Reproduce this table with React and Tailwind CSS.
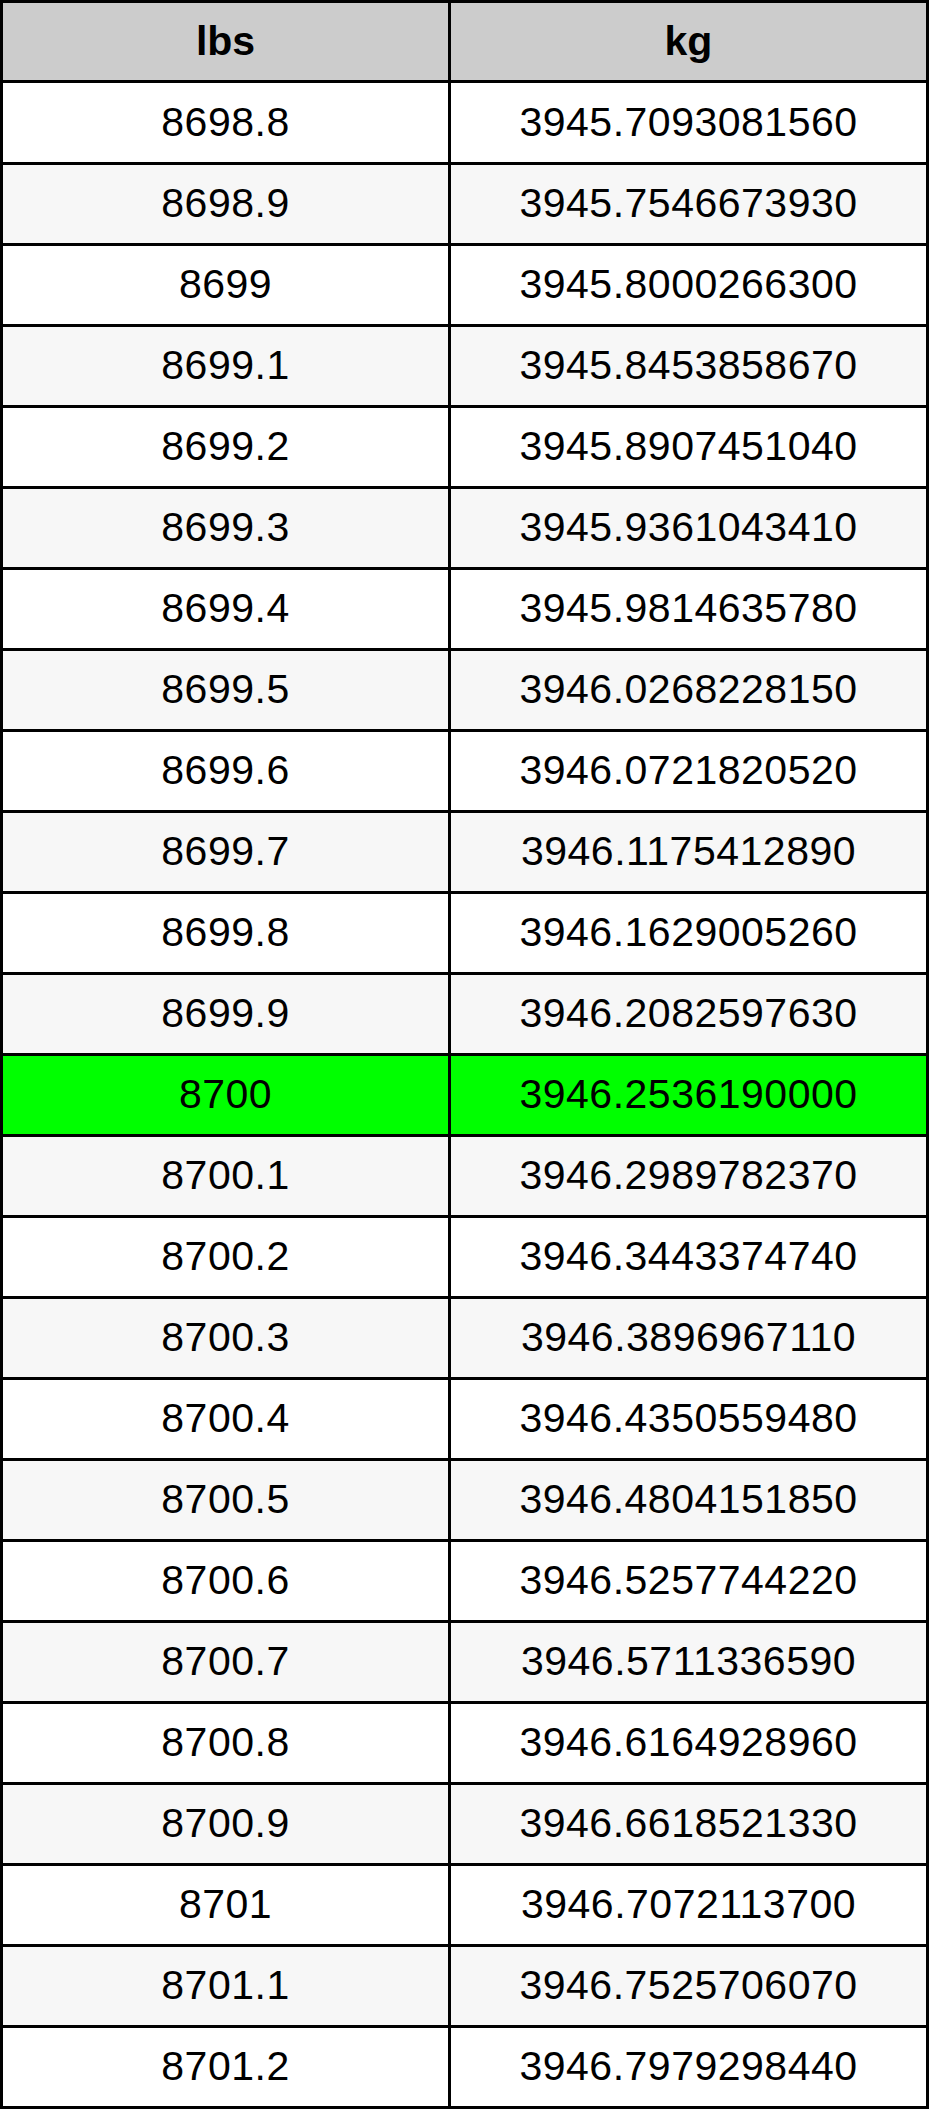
const rows = [
  ["8698.8", "3945.7093081560"],
  ["8698.9", "3945.7546673930"],
  ["8699", "3945.8000266300"],
  ["8699.1", "3945.8453858670"],
  ["8699.2", "3945.8907451040"],
  ["8699.3", "3945.9361043410"],
  ["8699.4", "3945.9814635780"],
  ["8699.5", "3946.0268228150"],
  ["8699.6", "3946.0721820520"],
  ["8699.7", "3946.1175412890"],
  ["8699.8", "3946.1629005260"],
  ["8699.9", "3946.2082597630"],
  ["8700", "3946.2536190000"],
  ["8700.1", "3946.2989782370"],
  ["8700.2", "3946.3443374740"],
  ["8700.3", "3946.3896967110"],
  ["8700.4", "3946.4350559480"],
  ["8700.5", "3946.4804151850"],
  ["8700.6", "3946.5257744220"],
  ["8700.7", "3946.5711336590"],
  ["8700.8", "3946.6164928960"],
  ["8700.9", "3946.6618521330"],
  ["8701", "3946.7072113700"],
  ["8701.1", "3946.7525706070"],
  ["8701.2", "3946.7979298440"],
];

export default function App() {
  return (
    <div className="bg-white min-h-[2115px] font-['Liberation_Sans',Arial,sans-serif] text-black">
      <div className="w-[929px] border-[3px] border-black">
        {/* HEADER */}
        <div className="grid grid-cols-[445px_1fr] h-[77px] bg-[#cccccc] text-[41px] font-bold">
          <div className="flex items-center justify-center">lbs</div>
          <div className="flex items-center justify-center border-l-[3px] border-black">kg</div>
        </div>

        {/* ROWS */}
        {rows.map(([lbs, kg], i) => {
          const bg = lbs === "8700" ? "bg-[#00ff00]" : i % 2 === 1 ? "bg-[#f7f7f7]" : "bg-white";
          return (
            <div
              key={lbs}
              className={`grid grid-cols-[445px_1fr] border-t-[3px] border-black text-[41px] tracking-[0.5px] ${
                i === 0 ? "h-[82px]" : "h-[81px]"
              } ${bg}`}
            >
              <div className="flex items-center justify-center">{lbs}</div>
              <div className="flex items-center justify-center border-l-[3px] border-black">{kg}</div>
            </div>
          );
        })}
      </div>
    </div>
  );
}
